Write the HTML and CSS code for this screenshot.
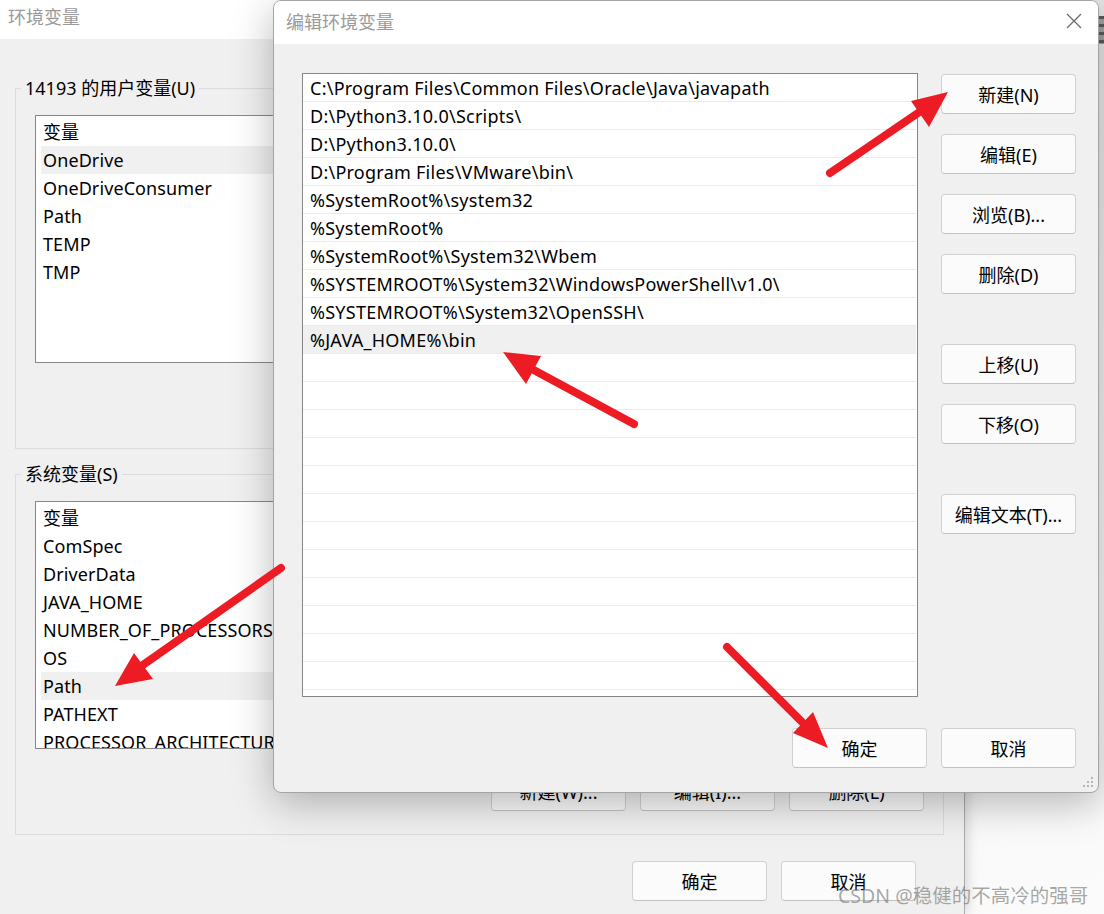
FILE: index.html
```html
<!DOCTYPE html>
<html lang="zh-CN">
<head>
    <meta charset="UTF-8">
    <title>环境变量</title>
    <link rel="stylesheet" href="styles.css">
</head>
<body>
    <div class="screen">
        <div class="env-window">
            <div class="env-title">环境变量</div>
            <div class="env-body">
                <div class="group">
                    <div class="group-title">14193 的用户变量(U)</div>
                    <div class="var-list">
                        <div class="var-row">变量</div>
                        <div class="var-row selected">OneDrive</div>
                        <div class="var-row">OneDriveConsumer</div>
                        <div class="var-row">Path</div>
                        <div class="var-row">TEMP</div>
                        <div class="var-row">TMP</div>
                    </div>
                    <div class="group-buttons">
                        <button class="btn">新建(N)...</button>
                        <button class="btn">编辑(E)...</button>
                        <button class="btn">删除(D)</button>
                    </div>
                </div>
                <div class="group sys">
                    <div class="group-title">系统变量(S)</div>
                    <div class="var-list">
                        <div class="var-row">变量</div>
                        <div class="var-row">ComSpec</div>
                        <div class="var-row">DriverData</div>
                        <div class="var-row">JAVA_HOME</div>
                        <div class="var-row">NUMBER_OF_PROCESSORS</div>
                        <div class="var-row">OS</div>
                        <div class="var-row selected">Path</div>
                        <div class="var-row">PATHEXT</div>
                        <div class="var-row">PROCESSOR_ARCHITECTURE</div>
                        <div class="var-row">PROCESSOR_IDENTIFIER</div>
                    </div>
                    <div class="group-buttons">
                        <button class="btn">新建(W)...</button>
                        <button class="btn">编辑(I)...</button>
                        <button class="btn">删除(L)</button>
                    </div>
                </div>
                <div class="env-footer">
                    <button class="btn">确定</button>
                    <button class="btn">取消</button>
                </div>
            </div>
        </div>
        <div class="desktop">
            <div class="other-window"></div>
        </div>
    </div>

    <!-- 编辑环境变量 对话框 -->
    <div class="edit-dialog">
        <div class="dialog-title">
            <span>编辑环境变量</span>
            <svg class="close-icon" width="18" height="18" viewBox="0 0 18 18">
                <path d="M2 2 L16 16 M16 2 L2 16" stroke="#6b6b6b" stroke-width="1.3" fill="none"/>
            </svg>
        </div>
        <div class="dialog-body">
            <div class="path-list">
                <div class="path-row">C:\Program Files\Common Files\Oracle\Java\javapath</div>
                <div class="path-row">D:\Python3.10.0\Scripts\</div>
                <div class="path-row">D:\Python3.10.0\</div>
                <div class="path-row">D:\Program Files\VMware\bin\</div>
                <div class="path-row">%SystemRoot%\system32</div>
                <div class="path-row">%SystemRoot%</div>
                <div class="path-row">%SystemRoot%\System32\Wbem</div>
                <div class="path-row">%SYSTEMROOT%\System32\WindowsPowerShell\v1.0\</div>
                <div class="path-row">%SYSTEMROOT%\System32\OpenSSH\</div>
                <div class="path-row selected">%JAVA_HOME%\bin</div>
                <div class="path-row"></div>
                <div class="path-row"></div>
                <div class="path-row"></div>
                <div class="path-row"></div>
                <div class="path-row"></div>
                <div class="path-row"></div>
                <div class="path-row"></div>
                <div class="path-row"></div>
                <div class="path-row"></div>
                <div class="path-row"></div>
                <div class="path-row"></div>
                <div class="path-row"></div>
            </div>
            <div class="side-buttons">
                <button class="btn">新建(N)</button>
                <button class="btn">编辑(E)</button>
                <button class="btn">浏览(B)...</button>
                <button class="btn">删除(D)</button>
                <button class="btn spaced">上移(U)</button>
                <button class="btn">下移(O)</button>
                <button class="btn spaced">编辑文本(T)...</button>
            </div>
        </div>
        <div class="dialog-footer">
            <button class="btn">确定</button>
            <button class="btn">取消</button>
        </div>
        <svg class="grip" width="12" height="12" viewBox="0 0 12 12">
            <rect x="8" y="0" width="2" height="2" fill="#b5b5b5"/>
            <rect x="4" y="4" width="2" height="2" fill="#b5b5b5"/>
            <rect x="8" y="4" width="2" height="2" fill="#b5b5b5"/>
            <rect x="0" y="8" width="2" height="2" fill="#b5b5b5"/>
            <rect x="4" y="8" width="2" height="2" fill="#b5b5b5"/>
            <rect x="8" y="8" width="2" height="2" fill="#b5b5b5"/>
        </svg>
    </div>

    <!-- 红色箭头标注 -->
    <svg class="arrows" width="1104" height="914" viewBox="0 0 1104 914">
        <g stroke="#ed1c24" stroke-width="8" stroke-linecap="round" fill="#ed1c24">
            <line x1="830" y1="173" x2="918" y2="113"/>
            <line x1="634" y1="424" x2="530" y2="368"/>
            <line x1="281" y1="568" x2="140" y2="667"/>
            <line x1="727" y1="647" x2="806" y2="726"/>
        </g>
        <g fill="#ed1c24">
            <polygon points="948,92 911,101 929,127"/>
            <polygon points="503,352 541,356 526,384"/>
            <polygon points="115,686 134,653 153,679"/>
            <polygon points="828,748 793,733 813,712"/>
        </g>
    </svg>

    <div class="watermark">CSDN @稳健的不高冷的强哥</div>
</body>
</html>
```

FILE: styles.css
```css
body {
    margin: 0;
    width: 1104px;
    height: 914px;
    overflow: hidden;
    position: relative;
    font-family: "Noto Sans", "Noto Sans CJK SC", sans-serif;
    font-size: 18px;
    color: #000;
}
.screen {
    display: flex;
    height: 914px;
}
.env-window {
    width: 964px;
    border-right: 1px solid #a9a9a9;
    display: flex;
    flex-direction: column;
    box-shadow: 4px 0 10px rgba(0, 0, 0, 0.12);
    position: relative;
}
.env-title {
    height: 39px;
    line-height: 35px;
    padding-left: 8px;
    background: #fff;
    color: #9a9a9a;
}
.env-body {
    flex: 1;
    background: #f0f0f0;
    padding: 49px 20px 0 15px;
}
.group {
    border: 1px solid #dcdcdc;
    padding: 0 19px 23px 19px;
}
.group + .group {
    margin-top: 25px;
}
.group-title {
    width: fit-content;
    margin: -13px 0 0 -14px;
    padding: 0 4px;
    line-height: 24px;
    background: #f0f0f0;
}
.var-list {
    margin-top: 15px;
    border: 1px solid #868686;
    background: #fff;
    padding-top: 2px;
    box-sizing: border-box;
    height: 248px;
    overflow: hidden;
}
.var-row {
    height: 28px;
    line-height: 28px;
    margin-left: 5px;
    padding-left: 2px;
    white-space: nowrap;
    letter-spacing: 0.1px;
}
.var-row.selected {
    background: #f0f0f0;
}
.group-buttons {
    display: flex;
    justify-content: flex-end;
    gap: 14px;
    margin-top: 22px;
}
.group:first-child .group-buttons {
    margin-top: 20px;
    margin-bottom: 2px;
}
.btn {
    width: 135px;
    height: 40px;
    font-family: inherit;
    font-size: 18px;
    color: #000;
    background: #fbfbfb;
    border: 1px solid #d1d1d1;
    border-bottom-color: #c2c2c2;
    border-radius: 4px;
    padding: 0;
}
.env-footer {
    display: flex;
    justify-content: flex-end;
    gap: 14px;
    margin-top: 26px;
    padding-right: 28px;
}
.desktop {
    flex: 1;
    background: linear-gradient(160deg, #e4e4e4, #f6f6f6 60%, #fbfbfb);
}
.other-window {
    width: 5px;
    height: 28px;
    margin: 16px 0 0 auto;
    background: repeating-linear-gradient(180deg, #5a5a5a 0 3px, #a0a0a0 3px 8px);
}

/* 编辑环境变量 */
.edit-dialog {
    position: absolute;
    left: 273px;
    top: 0;
    width: 826px;
    height: 793px;
    box-sizing: border-box;
    border: 1px solid #a4a4a4;
    border-radius: 8px;
    background: #f0f0f0;
    box-shadow: 0 10px 40px rgba(0, 0, 0, 0.28);
    overflow: hidden;
}
.dialog-title {
    height: 43px;
    box-sizing: border-box;
    background: #fff;
    display: flex;
    align-items: center;
    justify-content: space-between;
    padding: 0 15px 4px 12px;
    color: #9a9a9a;
}
.close-icon {
    display: block;
}
.dialog-body {
    display: flex;
    gap: 23px;
    padding: 29px 22px 0 28px;
}
.path-list {
    width: 616px;
    height: 624px;
    box-sizing: border-box;
    border: 1px solid #868686;
    background: #fff;
    overflow: hidden;
}
.path-row {
    height: 28px;
    line-height: 29px;
    box-sizing: border-box;
    border-bottom: 1px solid #ebebeb;
    padding-left: 7px;
    margin-right: 1px;
    white-space: nowrap;
    letter-spacing: 0.25px;
}
.path-row.selected {
    background: #f0f0f0;
}
.side-buttons {
    display: flex;
    flex-direction: column;
    gap: 20px;
    padding-top: 1px;
}
.side-buttons .spaced {
    margin-top: 30px;
}
.dialog-footer {
    display: flex;
    justify-content: flex-end;
    gap: 14px;
    margin-top: 31px;
    padding-right: 22px;
}
.grip {
    position: absolute;
    right: 3px;
    bottom: 3px;
}

.arrows {
    position: absolute;
    left: 0;
    top: 0;
    pointer-events: none;
}
.watermark {
    position: absolute;
    left: 838px;
    top: 880px;
    font-size: 19.5px;
    color: rgba(110, 110, 110, 0.6);
    white-space: nowrap;
}
```
